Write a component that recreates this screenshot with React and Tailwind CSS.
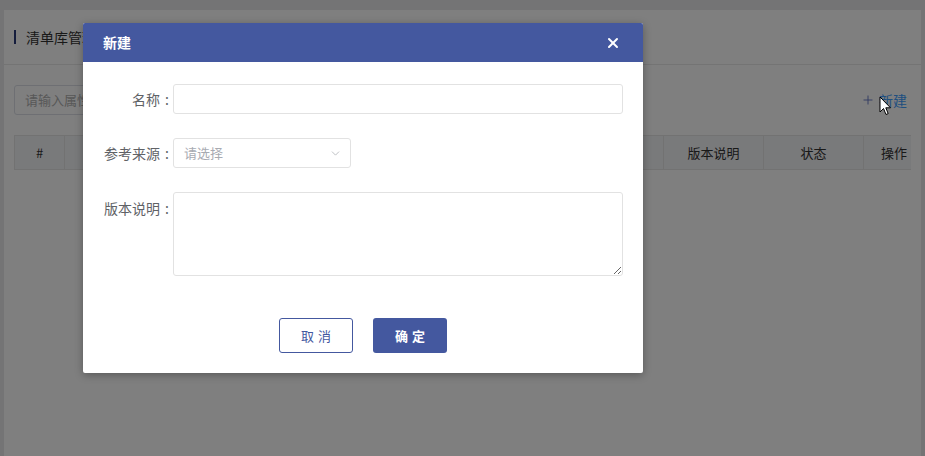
import { X, ChevronDown, Plus } from "lucide-react";

const FONT = { fontFamily: '"Noto Sans CJK SC", "Noto Sans", sans-serif' };

function BackgroundPage() {
  return (
    <div className="min-h-screen bg-[#e9e9eb] px-[4px] pt-[10px]">
      <div className="h-[446px] bg-white">
        <div className="flex h-[55px] items-center border-b border-[#e8e8e8] px-[10px]">
          <span className="mr-[10px] h-[14px] w-[2px] bg-[#2b3a7a]" />
          <span className="text-[14px] text-[#333]">清单库管理</span>
        </div>
        <div className="px-[10px]">
          <div className="mt-[20px] flex items-center justify-between">
            <div className="flex h-[30px] w-[220px] items-center rounded-[3px] border border-[#dcdfe6] px-[10px] text-[13px] text-[#b0b0b0]">
              请输入属性名称
            </div>
            <div className="mr-[4px] flex items-center gap-[4px] text-[14px] text-[#409eff]">
              <Plus className="h-[14px] w-[14px] text-[#5a6fc0]" strokeWidth={1.5} />
              <span>新建</span>
            </div>
          </div>
          <div className="mt-[20px] overflow-hidden">
            <div className="flex h-[35px] w-[960px] border border-[#e4e4e4] bg-[#f3f4f6] text-[13px] text-[#333]">
              <div className="flex w-[50px] items-center justify-center border-r border-[#e4e4e4]">#</div>
              <div className="flex w-[599px] items-center justify-center border-r border-[#e4e4e4]">名称</div>
              <div className="flex w-[100px] items-center justify-center border-r border-[#e4e4e4]">版本说明</div>
              <div className="flex w-[100px] items-center justify-center border-r border-[#e4e4e4]">状态</div>
              <div className="flex w-[60px] items-center justify-center">操作</div>
            </div>
          </div>
        </div>
      </div>
    </div>
  );
}

function Field({ label, children, top }) {
  return (
    <div className={`flex ${top ? "items-start" : "items-center"}`}>
      <label
        className={`flex w-[90px] shrink-0 justify-end pr-[4px] text-[14px] text-[#606266] ${top ? "pt-[6px]" : ""}`}
      >
        <span>{label}</span>
        <span className="ml-[5px]">:</span>
      </label>
      {children}
    </div>
  );
}

function Modal() {
  return (
    <div className="absolute left-[83px] top-[23px] w-[560px] rounded-[2px] bg-white shadow-[0_2px_8px_rgba(0,0,0,0.3)]">
      <div className="flex h-[39px] items-center justify-between rounded-t-[2px] bg-[#44589f] pl-[20px] pr-[22px]">
        <span className="text-[14px] font-bold text-white">新建</span>
        <X className="h-[16px] w-[16px] text-white" strokeWidth={3} />
      </div>
      <div className="flex flex-col gap-[24px] pb-[42px] pl-0 pr-[20px] pt-[22px]">
        <Field label="名称">
          <div className="h-[30px] flex-1 rounded-[3px] border border-[#e2e2e2]" />
        </Field>
        <Field label="参考来源">
          <div className="flex h-[30px] w-[178px] items-center justify-between rounded-[3px] border border-[#e2e2e2] pl-[10px] pr-[8px] text-[13px] text-[#a8abb2]">
            <span>请选择</span>
            <ChevronDown className="h-[13px] w-[13px] text-[#b0b3b8]" strokeWidth={1.5} />
          </div>
        </Field>
        <Field label="版本说明" top>
          <textarea className="h-[84px] flex-1 resize-y rounded-[3px] border border-[#e2e2e2] outline-none" />
        </Field>
      </div>
      <div className="flex justify-center gap-[20px] pb-[20px]">
        <button className="h-[35px] w-[74px] rounded-[3px] border border-[#44589f] bg-white pl-[4px] text-[13px] tracking-[4px] text-[#44589f]">
          取消
        </button>
        <button className="h-[35px] w-[74px] rounded-[3px] bg-[#44589f] pl-[4px] text-[13px] font-bold tracking-[4px] text-white">
          确定
        </button>
      </div>
    </div>
  );
}

function Cursor() {
  return (
    <svg className="absolute left-[879px] top-[96px]" width="13" height="21" viewBox="0 0 13 21">
      <path
        d="M1 1 L1 16 L4.5 12.5 L7 18.5 L9.2 17.6 L6.8 11.8 L11.5 11.8 Z"
        fill="#fff"
        stroke="#000"
        strokeWidth="1"
        strokeLinejoin="round"
      />
    </svg>
  );
}

export default function App() {
  return (
    <div className="relative h-[456px] overflow-hidden" style={FONT}>
      <BackgroundPage />
      <div className="absolute inset-0 bg-black/50" />
      <Modal />
      <Cursor />
    </div>
  );
}
